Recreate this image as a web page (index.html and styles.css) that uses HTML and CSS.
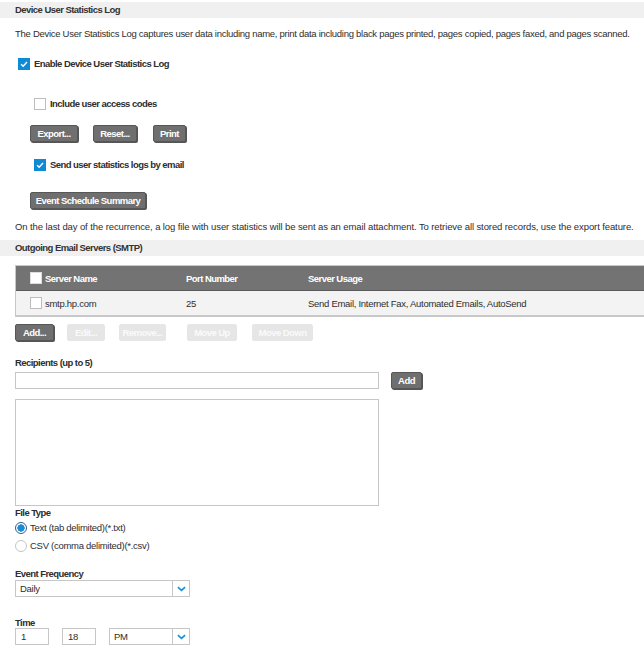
FILE: index.html
```html
<!DOCTYPE html>
<html>
<head>
<meta charset="utf-8">
<link rel="stylesheet" href="styles.css">
</head>
<body>
<div class="page">
  <div class="section-title t1">Device User Statistics Log</div>
  <p class="desc">The Device User Statistics Log captures user data including name, print data including black pages printed, pages copied, pages faxed, and pages scanned.</p>

  <label class="check-row enable"><span class="cb checked"><svg viewBox="0 0 12 12"><path d="M2.5 6.2 L5 8.6 L9.6 3.6" fill="none" stroke="#fff" stroke-width="1.8"/></svg></span><span class="bold">Enable Device User Statistics Log</span></label>

  <label class="check-row include"><span class="cb"></span><span class="bold">Include user access codes</span></label>

  <div class="btn-row r1">
    <button class="btn">Export...</button>
    <button class="btn">Reset...</button>
    <button class="btn">Print</button>
  </div>

  <label class="check-row send"><span class="cb checked"><svg viewBox="0 0 12 12"><path d="M2.5 6.2 L5 8.6 L9.6 3.6" fill="none" stroke="#fff" stroke-width="1.8"/></svg></span><span class="bold">Send user statistics logs by email</span></label>

  <div class="btn-row r2"><button class="btn">Event Schedule Summary</button></div>

  <p class="note">On the last day of the recurrence, a log file with user statistics will be sent as an email attachment. To retrieve all stored records, use the export feature.</p>

  <div class="section-title t2">Outgoing Email Servers (SMTP)</div>

  <div class="table">
    <div class="tr th">
      <div class="c1"><span class="cb white"></span>Server Name</div>
      <div class="c2">Port Number</div>
      <div class="c3">Server Usage</div>
    </div>
    <div class="tr td">
      <div class="c1"><span class="cb"></span>smtp.hp.com</div>
      <div class="c2">25</div>
      <div class="c3">Send Email, Internet Fax, Automated Emails, AutoSend</div>
    </div>
  </div>

  <div class="btn-row r3">
    <button class="btn">Add...</button>
    <button class="btn dis">Edit...</button>
    <button class="btn dis">Remove...</button>
    <button class="btn dis">Move Up</button>
    <button class="btn dis">Move Down</button>
  </div>

  <div class="label lab-rec">Recipients (up to 5)</div>
  <div class="rec-row">
    <div class="input wide"></div>
    <button class="btn add">Add</button>
  </div>
  <div class="textarea"></div>

  <div class="label lab-ft">File Type</div>
  <label class="radio-row first"><span class="radio on"></span>Text (tab delimited)(*.txt)</label>
  <label class="radio-row second"><span class="radio"></span>CSV (comma delimited)(*.csv)</label>

  <div class="label lab-ef">Event Frequency</div>
  <div class="select freq"><span class="val">Daily</span><span class="arrow"><svg viewBox="0 0 10 6"><path d="M1 1 L5 4.6 L9 1" fill="none" stroke="#1a8fd6" stroke-width="1.8"/></svg></span></div>

  <div class="label lab-time">Time</div>
  <div class="time-row">
    <div class="input small"><span>1</span></div>
    <div class="input small"><span>18</span></div>
    <div class="select pm"><span class="val">PM</span><span class="arrow"><svg viewBox="0 0 10 6"><path d="M1 1 L5 4.6 L9 1" fill="none" stroke="#1a8fd6" stroke-width="1.8"/></svg></span></div>
  </div>
</div>
</body>
</html>
```

FILE: styles.css
```css
html, body { margin: 0; padding: 0; background: #fff; }
body {
  font-family: "Liberation Sans", Arial, sans-serif;
  font-size: 9.5px;
  color: #2e2e2e;
  letter-spacing: -0.28px;
}
.page { display: flex; flex-direction: column; align-items: flex-start; }
.bold { font-weight: bold; letter-spacing: -0.55px; }

.section-title {
  align-self: stretch;
  background: #f0f0f0;
  height: 16px;
  line-height: 16px;
  padding-left: 15px;
  font-weight: bold;
  letter-spacing: -0.55px;
  color: #333;
}
.t1 { margin-top: 2px; }
.t2 { margin-top: 8px; }

.desc { margin: 10px 0 0 15px; line-height: 11px; }
.note { margin: 12px 0 0 15px; line-height: 11px; letter-spacing: -0.1px; }

.check-row { display: flex; align-items: center; gap: 4px; line-height: 12px; }
.enable { margin: 19px 0 0 18px; }
.include { margin: 28px 0 0 34px; }
.send { margin: 17px 0 0 34px; }

.cb {
  display: inline-block;
  box-sizing: border-box;
  width: 12px; height: 12px;
  border: 1px solid #bdbdbd;
  background: #fff;
  flex: none;
}
.cb.checked { background: #0f8ad4; border-color: #0f8ad4; }
.cb svg { display: block; width: 10px; height: 10px; }
.cb.white { border: 1px solid #ddd; }

.btn-row { display: flex; }
.btn {
  font-family: inherit;
  font-size: 9.5px;
  font-weight: bold;
  letter-spacing: -0.55px;
  color: #fff;
  background: #6f6f6f;
  border: 1px solid #575757;
  border-radius: 2px;
  box-shadow: 1px 1px 0 #555;
  height: 17px;
  padding: 0;
  line-height: 15px;
  margin: 0;
  white-space: nowrap;
  text-align: center;
}
.r1 { margin: 15px 0 0 30px; gap: 15px; }
.r1 .btn:nth-child(1) { width: 48px; }
.r1 .btn:nth-child(2) { width: 44px; }
.r1 .btn:nth-child(3) { width: 33px; margin-left: 1px; }
.r2 { margin: 21px 0 0 30px; }
.r2 .btn { width: 116px; }
.r3 { margin: 7px 0 0 15px; }
.r3 .btn:nth-child(1) { width: 39px; margin-right: 13px; }
.r3 .btn:nth-child(2) { width: 38px; margin-right: 14px; }
.r3 .btn:nth-child(3) { width: 47px; margin-right: 21px; }
.r3 .btn:nth-child(4) { width: 50px; margin-right: 15px; }
.r3 .btn:nth-child(5) { width: 61px; }
.btn.dis {
  background: #e6e6e6;
  border-color: #e6e6e6;
  box-shadow: none;
  color: #fafafa;
}

.table {
  align-self: stretch;
  margin: 9px 0 0 15px;
  border: 1px solid #c8c8c8;
  border-right: none;
  box-sizing: border-box;
}
.tr { display: flex; align-items: center; }
.th {
  background: #737373;
  color: #fff;
  height: 24px;
  font-weight: bold;
  letter-spacing: -0.55px;
  border-bottom: 1px solid #5a5a5a;
}
.td {
  background: #f3f3f3;
  height: 24px;
  border-bottom: 1px solid #c8c8c8;
}
.c1 { box-sizing: border-box; width: 170px; padding-left: 14px; display: flex; align-items: center; gap: 3px; }
.c2 { width: 122px; }
.c3 { flex: 1; }

.label { font-weight: bold; letter-spacing: -0.55px; line-height: 11px; margin-left: 15px; }
.lab-rec { margin-top: 16px; }
.rec-row { display: flex; align-items: center; margin: 4px 0 0 15px; }
.input {
  box-sizing: border-box;
  height: 17px;
  border: 1px solid #c6c6c6;
  background: #fff;
  display: flex;
  align-items: center;
  padding-left: 5px;
}
.input.wide { width: 364px; }
.btn.add { width: 31px; margin-left: 12px; }
.textarea {
  box-sizing: border-box;
  margin: 10px 0 0 15px;
  width: 364px; height: 107px;
  border: 1px solid #c6c6c6;
}
.lab-ft { margin-top: 1px; }
.radio-row { display: flex; align-items: center; gap: 3px; margin-left: 15px; line-height: 12px; }
.radio-row.first { margin-top: 4px; }
.radio-row.second { margin-top: 6px; }
.radio {
  box-sizing: border-box;
  width: 12px; height: 12px;
  border-radius: 50%;
  border: 1px solid #c4c4c4;
  background: #fff;
  flex: none;
}
.radio.on {
  border: 1px solid #2c5f8c;
  background: radial-gradient(circle, #1a8ad6 0 3.4px, #fff 3.9px);
}
.lab-ef { margin-top: 16px; }
.select {
  box-sizing: border-box;
  height: 17px;
  border: 1px solid #c6c6c6;
  background: #fff;
  display: flex;
  align-items: stretch;
}
.select .val { flex: 1; padding-left: 4px; display: flex; align-items: center; }
.select .arrow {
  width: 16px;
  border-left: 1px solid #c6c6c6;
  display: flex; align-items: center; justify-content: center;
}
.select .arrow svg { width: 9px; height: 6px; display: block; }
.freq { margin: 1px 0 0 15px; width: 175px; }
.lab-time { margin-top: 20px; }
.time-row { display: flex; margin: 0 0 0 15px; gap: 13px; }
.input.small { width: 34px; }
.pm { width: 81px; }
```
